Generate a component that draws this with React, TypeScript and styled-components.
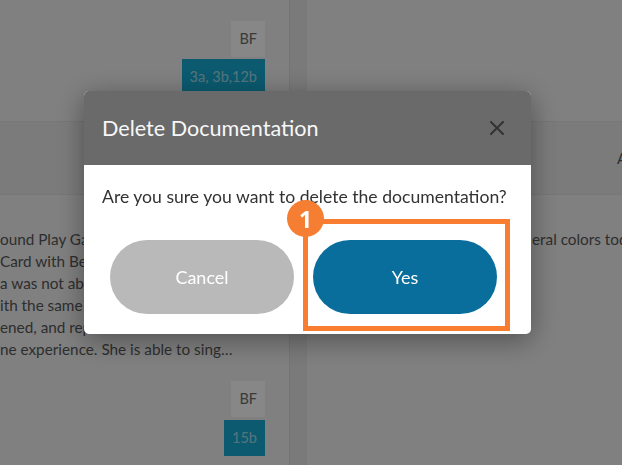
import React from "react";
import styled, { createGlobalStyle } from "styled-components";

const GlobalStyle = createGlobalStyle`
  html, body { margin: 0; padding: 0; }
  body {
    font-family: Lato, "Liberation Sans", sans-serif;
    background: #f1f1f1;
    overflow: hidden;
  }
`;

const Page = styled.div`
  display: grid;
  grid-template-columns: 289px 18px 1fr;
  width: 622px;
  height: 465px;
  overflow: hidden;
  background: #f1f1f1;
`;

const Column = styled.div`
  display: flex;
  flex-direction: column;
  min-width: 0;
  overflow: hidden;
`;

const Gutter = styled.div`
  background: #e6e6e6;
  border-left: 1px solid #dcdcdc;
`;

const TopCard = styled.div`
  height: 122px;
  box-sizing: border-box;
  border-bottom: 1px solid #e0e0e0;
  display: flex;
  flex-direction: column;
  align-items: flex-end;
  gap: 2px;
  padding: 21px 24px 0 0;
`;

const Tag = styled.div<{ $tone: "plain" | "teal" }>`
  height: 36px;
  line-height: 36px;
  padding: 0 8px;
  font-size: 14.5px;
  white-space: nowrap;
  background: ${(p) => (p.$tone === "teal" ? "#15aad2" : "#ffffff")};
  color: ${(p) => (p.$tone === "teal" ? "rgba(255,255,255,0.62)" : "#6e6e6e")};
`;

const SectionHeader = styled.div<{ $inset?: number }>`
  height: 72px;
  border-bottom: 1px solid #e0e0e0;
  background: #e9e9e9;
  display: flex;
  align-items: center;
  padding-left: ${(p) => p.$inset ?? 0}px;
  font-size: 15px;
  color: #575757;
  white-space: nowrap;
`;

const Body = styled.div<{ $inset?: number }>`
  padding: 33px 0 0 ${(p) => p.$inset ?? 0}px;
  display: flex;
  flex-direction: column;
`;

const Line = styled.div`
  font-size: 15.3px;
  line-height: 22px;
  color: #575757;
  white-space: nowrap;
`;

const TagStack = styled.div`
  display: flex;
  flex-direction: column;
  align-items: flex-end;
  gap: 3px;
  padding: 21px 24px 0 0;
`;

const Overlay = styled.div`
  position: fixed;
  inset: 0;
  background: rgba(0, 0, 0, 0.47);
  padding: 91px 0 0 84px;
`;

const Dialog = styled.div`
  position: relative;
  width: 447px;
  background: #ffffff;
  border-radius: 5px;
  box-shadow: 0 6px 28px rgba(0, 0, 0, 0.38);
`;

const DialogHeader = styled.div`
  height: 74px;
  background: #6a6a6a;
  border-radius: 5px 5px 0 0;
  display: flex;
  align-items: center;
  justify-content: space-between;
  padding: 0 27px 0 18px;
`;

const Title = styled.h2`
  margin: 0;
  font-size: 21.6px;
  font-weight: 400;
  color: #f7f7f7;
`;

const CloseButton = styled.button`
  border: 0;
  background: transparent;
  padding: 0;
  width: 14px;
  height: 14px;
  display: flex;
  cursor: pointer;
`;

const DialogBody = styled.div`
  padding: 20px 18px 20px;
`;

const Question = styled.p`
  margin: 0;
  font-size: 17.6px;
  line-height: 24px;
  color: #333333;
  white-space: nowrap;
`;

const Actions = styled.div`
  display: flex;
  gap: 19px;
  padding-left: 8px;
  margin-top: 31px;
`;

const PillButton = styled.button<{ $variant: "muted" | "primary" }>`
  width: 184px;
  height: 74px;
  border: 0;
  border-radius: 37px;
  font-family: inherit;
  font-size: 18px;
  color: #ffffff;
  background: ${(p) => (p.$variant === "primary" ? "#0a6e9c" : "#b9b9b9")};
  cursor: pointer;
`;

const Highlight = styled.div`
  position: absolute;
  left: 219px;
  top: 128px;
  width: 207px;
  height: 112px;
  box-sizing: border-box;
  border: 5px solid #f97d31;
  pointer-events: none;
`;

const StepBadge = styled.div`
  position: absolute;
  left: 203px;
  top: 109px;
  width: 37px;
  height: 37px;
  border-radius: 50%;
  background: #f57e32;
  color: #ffffff;
  font-family: "Open Sans", Lato, sans-serif;
  font-weight: 700;
  font-size: 23px;
  display: flex;
  align-items: center;
  justify-content: center;
`;

const leftLines = [
  "ound Play Ga",
  "Card with Be",
  "a was not ab",
  "ith the same",
  "ened, and rep",
  "ne experience. She is able to sing…",
];

export default function App() {
  return (
    <>
      <GlobalStyle />
      <Page>
        <Column>
          <TopCard>
            <Tag $tone="plain">BF</Tag>
            <Tag $tone="teal">3a, 3b,12b</Tag>
          </TopCard>
          <SectionHeader />
          <Body>
            {leftLines.map((l) => (
              <Line key={l}>{l}</Line>
            ))}
          </Body>
          <TagStack>
            <Tag $tone="plain">BF</Tag>
            <Tag $tone="teal">15b</Tag>
          </TagStack>
        </Column>
        <Gutter />
        <Column>
          <TopCard />
          <SectionHeader $inset={310}>All</SectionHeader>
          <Body $inset={225}>
            <Line>eral colors today</Line>
          </Body>
        </Column>
      </Page>
      <Overlay>
        <Dialog role="dialog" aria-modal="true">
          <DialogHeader>
            <Title>Delete Documentation</Title>
            <CloseButton aria-label="Close">
              <svg width="14" height="14" viewBox="0 0 14 14">
                <path d="M1 1L13 13M13 1L1 13" stroke="#333" strokeWidth="2" strokeLinecap="square" />
              </svg>
            </CloseButton>
          </DialogHeader>
          <DialogBody>
            <Question>Are you sure you want to delete the documentation?</Question>
            <Actions>
              <PillButton $variant="muted">Cancel</PillButton>
              <PillButton $variant="primary">Yes</PillButton>
            </Actions>
          </DialogBody>
          <Highlight />
          <StepBadge>1</StepBadge>
        </Dialog>
      </Overlay>
    </>
  );
}
